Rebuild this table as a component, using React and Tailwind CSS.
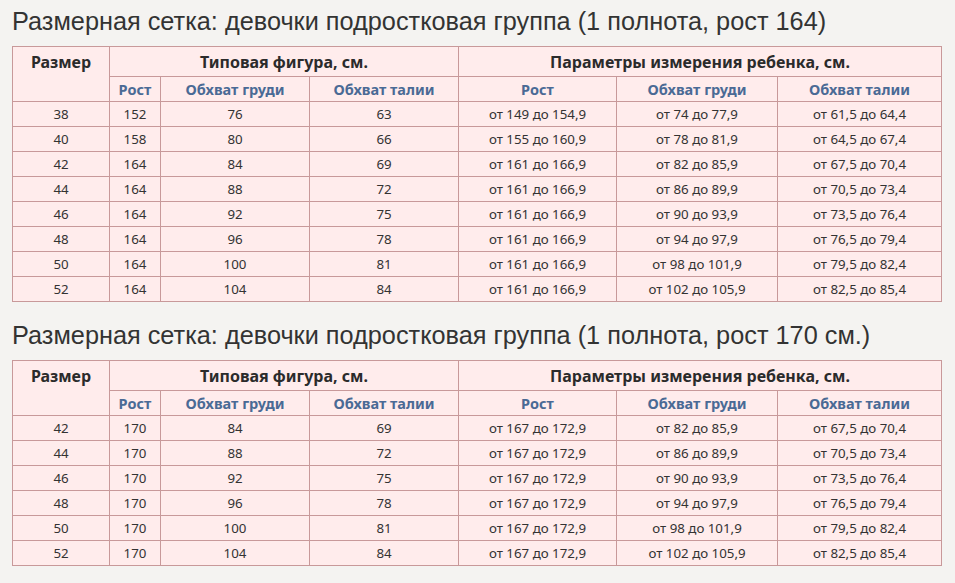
import React from "react";

const t1 = [
  ["38", "152", "76", "63", "от 149 до 154,9", "от 74 до 77,9", "от 61,5 до 64,4"],
  ["40", "158", "80", "66", "от 155 до 160,9", "от 78 до 81,9", "от 64,5 до 67,4"],
  ["42", "164", "84", "69", "от 161 до 166,9", "от 82 до 85,9", "от 67,5 до 70,4"],
  ["44", "164", "88", "72", "от 161 до 166,9", "от 86 до 89,9", "от 70,5 до 73,4"],
  ["46", "164", "92", "75", "от 161 до 166,9", "от 90 до 93,9", "от 73,5 до 76,4"],
  ["48", "164", "96", "78", "от 161 до 166,9", "от 94 до 97,9", "от 76,5 до 79,4"],
  ["50", "164", "100", "81", "от 161 до 166,9", "от 98 до 101,9", "от 79,5 до 82,4"],
  ["52", "164", "104", "84", "от 161 до 166,9", "от 102 до 105,9", "от 82,5 до 85,4"],
];

const t2 = [
  ["42", "170", "84", "69", "от 167 до 172,9", "от 82 до 85,9", "от 67,5 до 70,4"],
  ["44", "170", "88", "72", "от 167 до 172,9", "от 86 до 89,9", "от 70,5 до 73,4"],
  ["46", "170", "92", "75", "от 167 до 172,9", "от 90 до 93,9", "от 73,5 до 76,4"],
  ["48", "170", "96", "78", "от 167 до 172,9", "от 94 до 97,9", "от 76,5 до 79,4"],
  ["50", "170", "100", "81", "от 167 до 172,9", "от 98 до 101,9", "от 79,5 до 82,4"],
  ["52", "170", "104", "84", "от 167 до 172,9", "от 102 до 105,9", "от 82,5 до 85,4"],
];

const bd = "border border-[#c8999a]";

function SizeTable({ rows }) {
  return (
    <table className="table-fixed border-collapse w-[929px] bg-[#ffecec] text-[#333] font-['Noto_Sans',sans-serif]">
      <colgroup>
        <col className="w-[97px]" />
        <col className="w-[51px]" />
        <col className="w-[149px]" />
        <col className="w-[149px]" />
        <col className="w-[158px]" />
        <col className="w-[161px]" />
        <col className="w-[164px]" />
      </colgroup>
      <thead>
        <tr className="h-[30px]">
          <th rowSpan={2} className={`${bd} align-top pt-[4px] text-[16px] leading-[22px] font-bold text-[#2b2b2b]`}>Размер</th>
          <th colSpan={3} className={`${bd} text-[16px] leading-[22px] font-bold text-[#2b2b2b]`}>Типовая фигура, см.</th>
          <th colSpan={3} className={`${bd} text-[16px] leading-[22px] font-bold text-[#2b2b2b]`}>Параметры измерения ребенка, см.</th>
        </tr>
        <tr className="h-[25px] text-[14.5px] leading-none font-bold text-[#4a6a95]">
          <th className={bd}>Рост</th>
          <th className={bd}>Обхват груди</th>
          <th className={bd}>Обхват талии</th>
          <th className={bd}>Рост</th>
          <th className={bd}>Обхват груди</th>
          <th className={bd}>Обхват талии</th>
        </tr>
      </thead>
      <tbody>
        {rows.map((r, i) => (
          <tr key={i} className="h-[25px] text-[13.3px]">
            {r.map((c, j) => (
              <td key={j} className={`${bd} text-center p-0 pt-[2px] leading-none`}>{c}</td>
            ))}
          </tr>
        ))}
      </tbody>
    </table>
  );
}

export default function App() {
  return (
    <div className="min-h-[583px] bg-[#f4f3f1] pl-[12px] pt-[6px] font-['Liberation_Sans',sans-serif]">
      <h2 className="text-[25.3px] leading-[30px] text-[#333] mb-[10px] whitespace-nowrap">Размерная сетка: девочки подростковая группа (1 полнота, рост 164)</h2>
      <SizeTable rows={t1} />
      <h2 className="text-[25.3px] leading-[30px] text-[#333] mt-[18px] mb-[10px] whitespace-nowrap">Размерная сетка: девочки подростковая группа (1 полнота, рост 170 см.)</h2>
      <SizeTable rows={t2} />
    </div>
  );
}
